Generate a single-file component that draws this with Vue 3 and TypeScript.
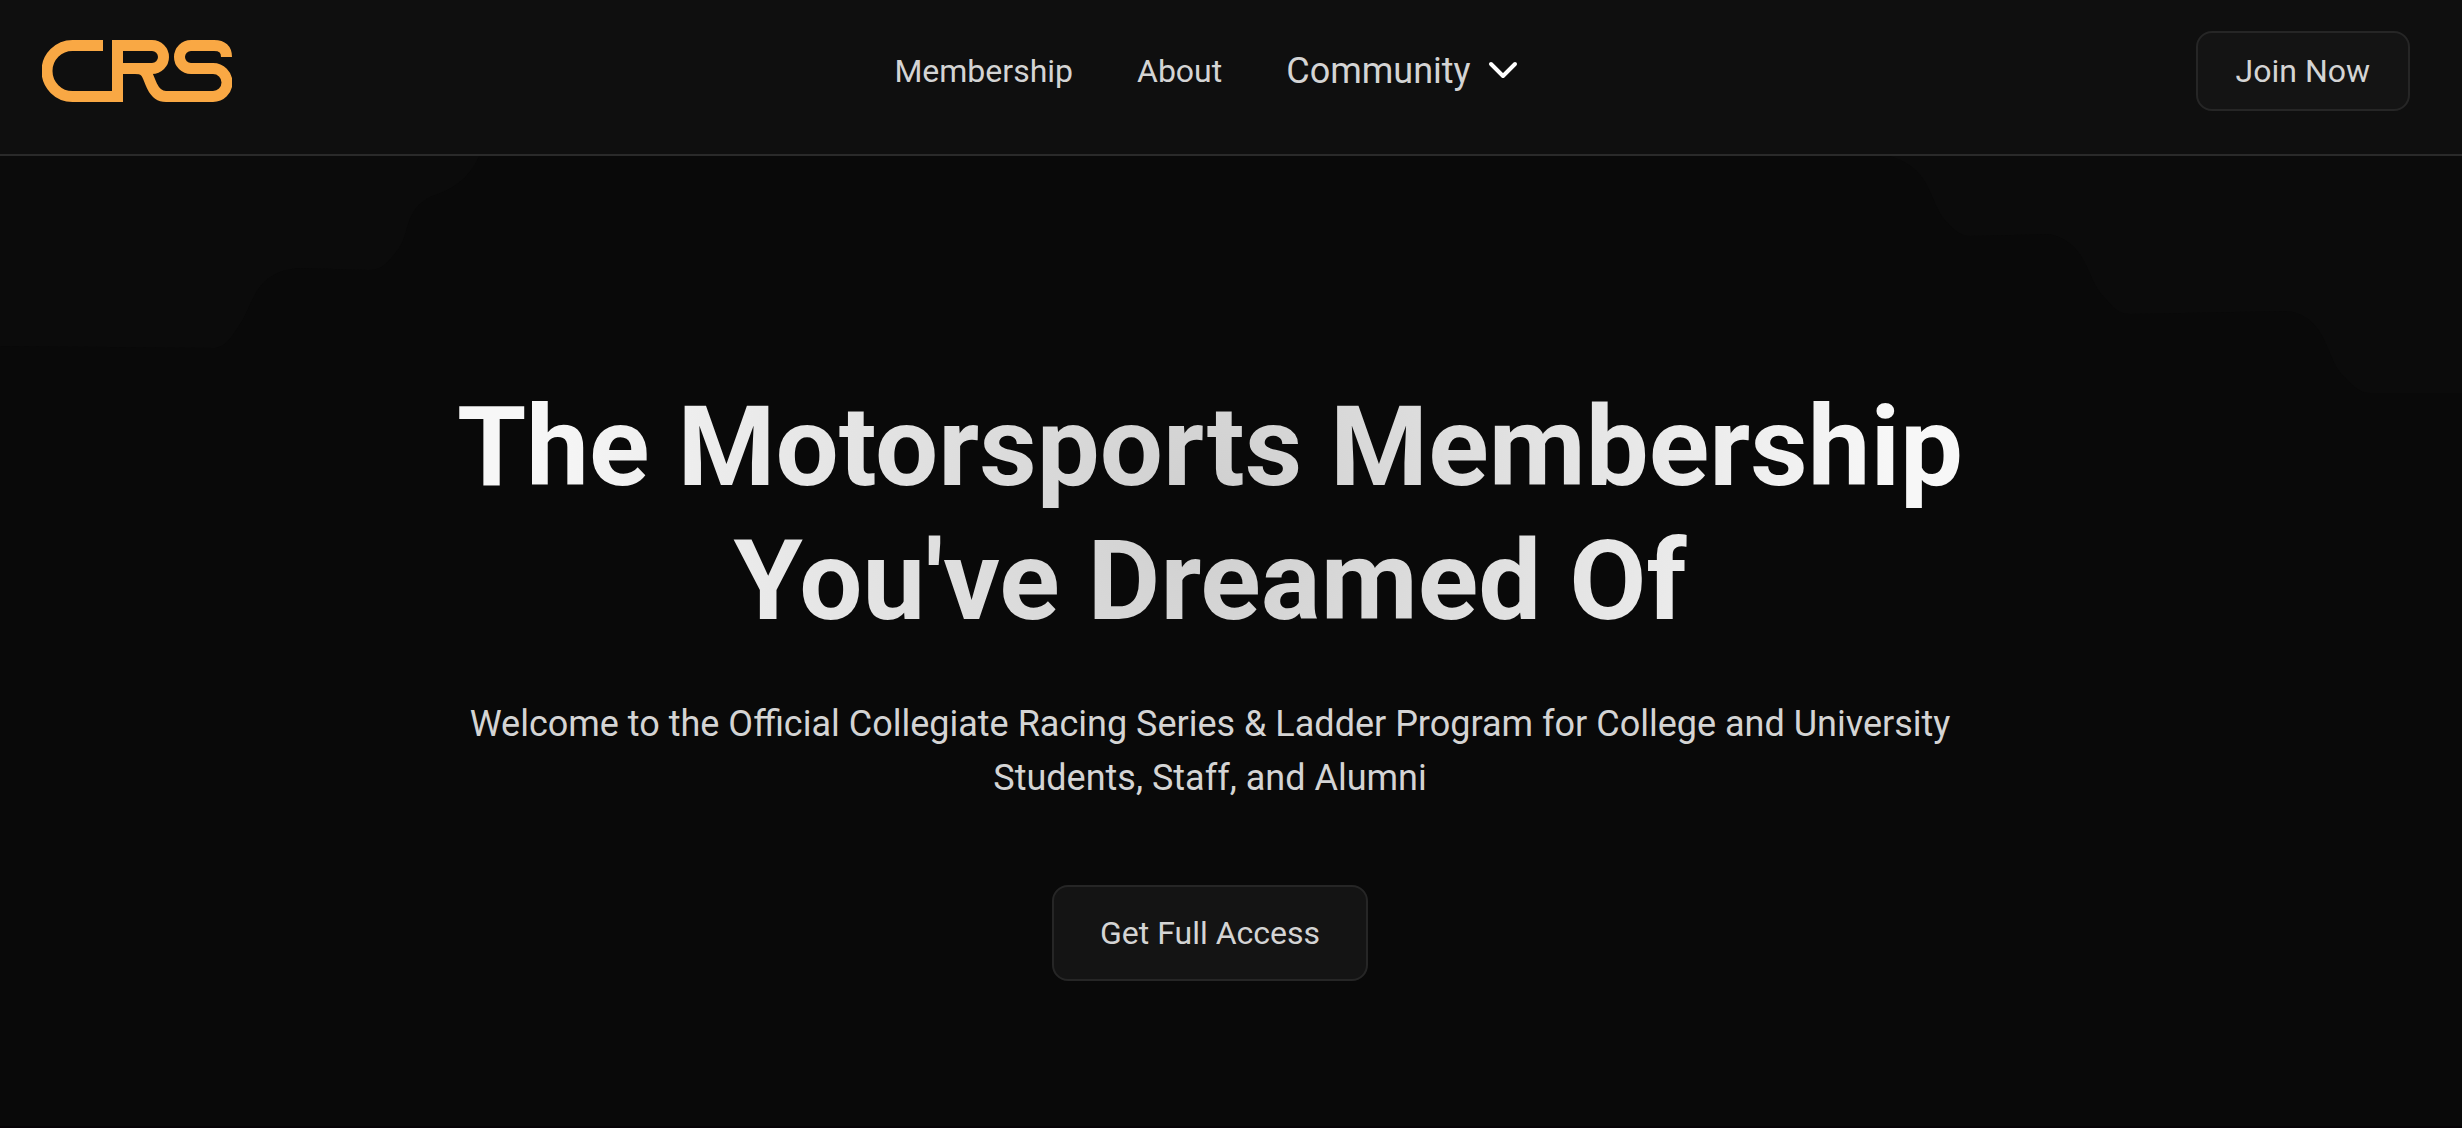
<script setup lang="ts">
interface NavLink {
  label: string
  href: string
}

const links: NavLink[] = [
  { label: 'Membership', href: '#membership' },
  { label: 'About', href: '#about' },
]
</script>

<template>
  <div class="page">
    <header class="header">
      <a class="logo" href="#" aria-label="CRS home">
        <svg viewBox="0 0 190 62" width="190" height="62" fill="none" stroke="#f9a844" stroke-width="11">
          <path d="M61 5.5H30.500A25.500 25.500 0 0 0 30.500 56.500H75.500V5.500H110A11.500 11.500 0 0 1 110 28.500H81" />
          <path d="M81 28.500H93C106 28.500 105 36 110 46Q115 56.500 124 56.500H171A14 14 0 0 0 171 28.500H149A11.500 11.500 0 0 1 149 5.500H172Q184.500 5.500 184.500 17" />
        </svg>
      </a>
      <nav class="nav" aria-label="Main">
        <a v-for="link in links" :key="link.label" class="nav-link" :href="link.href">{{ link.label }}</a>
        <button class="menu" type="button" aria-haspopup="true">
          Community
          <svg class="chevron" viewBox="0 0 30 20" width="30" height="20" aria-hidden="true">
            <path d="M3 3L15 15L27 3" fill="none" stroke="#fff" stroke-width="4" stroke-linecap="round" stroke-linejoin="round" />
          </svg>
        </button>
      </nav>
      <button class="button join" type="button">Join Now</button>
    </header>
    <main class="hero">
      <svg class="wave wave-left" viewBox="0 0 480 192" width="480" height="192" aria-hidden="true">
        <path d="M0 0H479C470 20 457 32 432 40C402 54 411 80 396 96C385 110 380 114 368 114L300 112C255 115 255 145 240 168C231 182 226 190 215 192L0 190Z" />
      </svg>
      <svg class="wave wave-right" viewBox="0 0 572 238" width="572" height="238" aria-hidden="true">
        <path d="M0 0C45 14 38 48 58 67C65 76 73 80 80 80L160 78C200 88 195 124 216 143C226 155 231 158 240 158L398 155C440 162 435 205 455 221C463 231 472 238 482 237H572V0Z" />
      </svg>
      <h1 class="title">The Motorsports Membership<br />You've Dreamed Of</h1>
      <p class="lead">
        Welcome to the Official Collegiate Racing Series &amp; Ladder Program for College and University
        Students, Staff, and Alumni
      </p>
      <button class="button access" type="button">Get Full Access</button>
    </main>
  </div>
</template>

<style>
body {
  margin: 0;
  background: #090909;
}
</style>

<style scoped>
.page {
  min-height: 100vh;
  box-sizing: border-box;
  display: flex;
  flex-direction: column;
  border-bottom: 2px solid #060306;
  background: #090909;
  color: #d4d4d4;
  font-family: Roboto, "Liberation Sans", sans-serif;
}

.header {
  display: grid;
  grid-template-columns: 1fr auto 1fr;
  align-items: center;
  box-sizing: border-box;
  height: 156px;
  padding: 0 52px 12px 42px;
  border-bottom: 2px solid #2a2a2a;
  background: #0f0f0f;
}

.logo,
.logo svg {
  display: block;
  width: 190px;
}

.nav {
  display: flex;
  align-items: center;
  gap: 64px;
  padding-right: 40px;
}

.nav-link {
  color: inherit;
  font-size: 32px;
  line-height: 48px;
  text-decoration: none;
}

.menu {
  display: flex;
  align-items: center;
  gap: 17px;
  padding: 0;
  border: 0;
  background: none;
  color: inherit;
  font: inherit;
  font-size: 36px;
  line-height: 48px;
}

.button {
  box-sizing: border-box;
  padding: 0 38px;
  border: 2px solid #262626;
  border-radius: 16px;
  background: #141414;
  color: inherit;
  font: inherit;
  font-size: 32px;
  line-height: 48px;
}

.join {
  justify-self: end;
  height: 80px;
}

.hero {
  position: relative;
  flex: 1;
  display: flex;
  flex-direction: column;
  align-items: center;
  padding: 224px 42px 140px 0;
}

.wave {
  position: absolute;
  top: 0;
  fill: #0b0b0b;
}

.wave-left {
  left: 0;
}

.wave-right {
  right: 0;
}

.title {
  position: relative;
  margin: 0;
  background: radial-gradient(circle at center, #cfcfcf, #f7f7f7 90%);
  background-clip: text;
  color: transparent;
  font-size: 112px;
  font-weight: 700;
  line-height: 134px;
  text-align: center;
}

.lead {
  position: relative;
  max-width: 1536px;
  margin: 49px 0 80px;
  font-size: 36px;
  line-height: 54px;
  text-align: center;
}

.access {
  position: relative;
  height: 96px;
  padding: 0 46px;
}
</style>
